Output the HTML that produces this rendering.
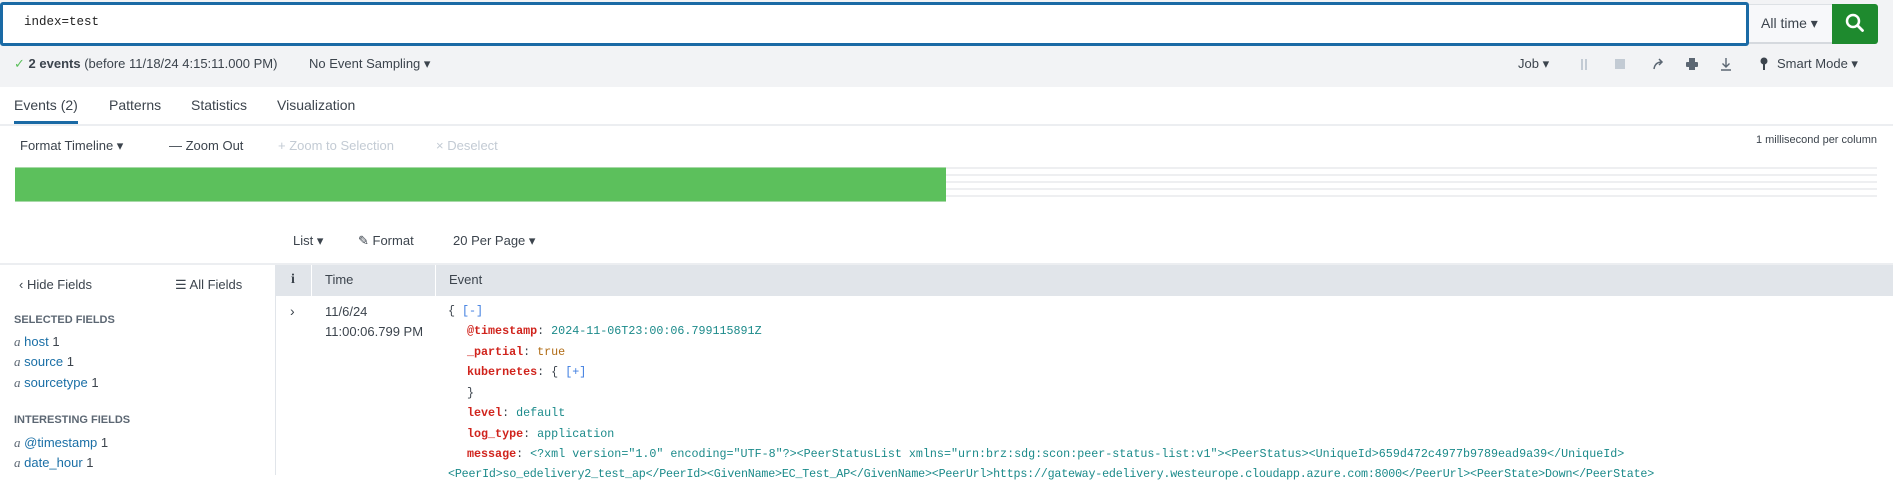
<!DOCTYPE html>
<html><head><meta charset="utf-8"><style>
*{margin:0;padding:0;box-sizing:border-box}
body{width:1893px;height:475px;overflow:hidden;background:#fff;font-family:"Liberation Sans",sans-serif;color:#3c444d;position:relative;font-size:13px}
.a{position:absolute;white-space:nowrap}
.mono{font-family:"Liberation Mono",monospace;font-size:11.7px}
.k{color:#d0231c;font-weight:bold}
.v{color:#1b8a8a}
.b{color:#3e7de0}
.t{color:#b06b14}
.lnk{color:#1a6fa6}
.it{font-family:"Liberation Serif",serif;font-style:italic;color:#5c6773}
</style></head><body>
<div class="a" style="left:0;top:0;width:1893px;height:87px;background:#f2f3f5"></div>
<div class="a" style="left:0;top:2px;width:1749px;height:44px;background:#fff;border:3px solid #1a6aa5;border-radius:3px"></div>
<div class="a mono" style="left:24px;top:15px;font-size:12.5px;color:#222">index=test</div>
<div class="a" style="left:1749px;top:4px;width:83px;height:40px;background:#f7f8fa;border-top:1px solid #dde1e5;border-bottom:2px solid #d5d9de"></div>
<div class="a" style="left:1761px;top:15px;font-size:14px;color:#3c444d">All time ▾</div>
<div class="a" style="left:1832px;top:4px;width:46px;height:40px;background:#1e8a2e;border-radius:0 3px 3px 0"></div>
<svg class="a" style="left:1845px;top:13px" width="20" height="20" viewBox="0 0 20 20"><circle cx="8" cy="8" r="6" fill="none" stroke="#fff" stroke-width="2.5"/><line x1="12.5" y1="12.5" x2="17.5" y2="17.5" stroke="#fff" stroke-width="2.8" stroke-linecap="round"/></svg>

<div class="a" style="left:14px;top:56px;font-size:13px"><span style="color:#5cc05c">✓</span> <b>2 events</b> (before 11/18/24 4:15:11.000 PM)</div>
<div class="a" style="left:309px;top:56px;font-size:13px">No Event Sampling ▾</div>
<div class="a" style="left:1518px;top:56px;font-size:13px">Job ▾</div>
<div class="a" style="left:1581px;top:59px;width:2px;height:11px;background:#c3cbd4"></div>
<div class="a" style="left:1585px;top:59px;width:2px;height:11px;background:#c3cbd4"></div>
<div class="a" style="left:1615px;top:59px;width:10px;height:10px;background:#c3cbd4"></div>
<svg class="a" style="left:1652px;top:57px" width="12" height="14" viewBox="0 0 12 14"><path d="M2 12 Q3 5 10 5 M7 2 L10 5 L7 8" fill="none" stroke="#5c6773" stroke-width="1.5"/></svg>
<svg class="a" style="left:1686px;top:58px" width="12" height="12" viewBox="0 0 12 12"><rect x="3" y="0" width="6" height="4" fill="#5c6773"/><rect x="0" y="4" width="12" height="5" rx="1" fill="#5c6773"/><rect x="3" y="8" width="6" height="4" fill="#5c6773"/></svg>
<svg class="a" style="left:1720px;top:57px" width="12" height="14" viewBox="0 0 12 14"><path d="M6 1 V10 M2.5 6.5 L6 10 L9.5 6.5 M1 13 H11" fill="none" stroke="#5c6773" stroke-width="1.4"/></svg>
<svg class="a" style="left:1760px;top:57px" width="8" height="14" viewBox="0 0 8 14"><circle cx="4" cy="4" r="3.5" fill="#3c444d"/><rect x="3" y="6" width="2" height="7" fill="#3c444d"/></svg>
<div class="a" style="left:1777px;top:56px;font-size:13px">Smart Mode ▾</div>

<div class="a" style="left:14px;top:97px;font-size:14px;color:#3c444d">Events (2)</div>
<div class="a" style="left:109px;top:97px;font-size:14px">Patterns</div>
<div class="a" style="left:191px;top:97px;font-size:14px">Statistics</div>
<div class="a" style="left:277px;top:97px;font-size:14px">Visualization</div>
<div class="a" style="left:14px;top:121px;width:64px;height:3px;background:#1a6aa5"></div>
<div class="a" style="left:0;top:124px;width:1893px;height:2px;background:#eceef1"></div>

<div class="a" style="left:20px;top:138px;font-size:13px">Format Timeline ▾</div>
<div class="a" style="left:169px;top:138px;font-size:13px">— Zoom Out</div>
<div class="a" style="left:278px;top:138px;font-size:13px;color:#c3cbd4">+ Zoom to Selection</div>
<div class="a" style="left:436px;top:138px;font-size:13px;color:#c3cbd4">× Deselect</div>
<div class="a" style="right:16px;top:134px;font-size:11px">1 millisecond per column</div>

<div class="a" style="left:945px;top:167px;width:932px;height:35px;background:repeating-linear-gradient(#eeeff1 0 2px,#fff 2px 7px)"></div>
<div class="a" style="left:15px;top:167px;width:931px;height:35px;background:#5cc05c;border-top:1px solid #a8d9a8;border-bottom:1px solid #a8d9a8"></div>

<div class="a" style="left:293px;top:233px;font-size:13px">List ▾</div>
<div class="a" style="left:358px;top:233px;font-size:13px">✎ Format</div>
<div class="a" style="left:453px;top:233px;font-size:13px">20 Per Page ▾</div>

<div class="a" style="left:0;top:263px;width:1893px;height:2px;background:#eceef1"></div>
<div class="a" style="left:276px;top:265px;width:1617px;height:31px;background:#e1e5ea"></div>
<div class="a" style="left:311px;top:265px;width:1px;height:31px;background:#fff"></div>
<div class="a" style="left:435px;top:265px;width:1px;height:31px;background:#fff"></div>
<div class="a" style="left:275px;top:265px;width:1px;height:210px;background:#e1e5ea"></div>
<div class="a" style="left:291px;top:272px;font-family:'Liberation Serif',serif;font-weight:bold;font-size:14px">i</div>
<div class="a" style="left:325px;top:272px;font-size:13px">Time</div>
<div class="a" style="left:449px;top:272px;font-size:13px">Event</div>

<div class="a" style="left:19px;top:277px;font-size:13px">‹ Hide Fields</div>
<div class="a" style="left:175px;top:277px;font-size:13px">☰ All Fields</div>
<div class="a" style="left:14px;top:314px;font-size:11px;font-weight:bold;color:#5c6773">SELECTED FIELDS</div>
<div class="a" style="left:14px;top:334px;font-size:13px"><span class="it">a</span> <span class="lnk">host</span> 1</div>
<div class="a" style="left:14px;top:354px;font-size:13px"><span class="it">a</span> <span class="lnk">source</span> 1</div>
<div class="a" style="left:14px;top:375px;font-size:13px"><span class="it">a</span> <span class="lnk">sourcetype</span> 1</div>
<div class="a" style="left:14px;top:414px;font-size:11px;font-weight:bold;color:#5c6773">INTERESTING FIELDS</div>
<div class="a" style="left:14px;top:435px;font-size:13px"><span class="it">a</span> <span class="lnk">@timestamp</span> 1</div>
<div class="a" style="left:14px;top:455px;font-size:13px"><span class="it">a</span> <span class="lnk">date_hour</span> 1</div>

<div class="a" style="left:290px;top:303px;font-size:14px">›</div>
<div class="a" style="left:325px;top:304px;font-size:13px">11/6/24</div>
<div class="a" style="left:325px;top:324px;font-size:13px">11:00:06.799 PM</div>

<div class="a mono" style="left:448px;top:304px">{ <span class="b">[-]</span></div>
<div class="a mono" style="left:467px;top:324px"><span class="k">@timestamp</span>: <span class="v">2024-11-06T23:00:06.799115891Z</span></div>
<div class="a mono" style="left:467px;top:345px"><span class="k">_partial</span>: <span class="t">true</span></div>
<div class="a mono" style="left:467px;top:365px"><span class="k">kubernetes</span>: { <span class="b">[+]</span></div>
<div class="a mono" style="left:467px;top:386px">}</div>
<div class="a mono" style="left:467px;top:406px"><span class="k">level</span>: <span class="v">default</span></div>
<div class="a mono" style="left:467px;top:427px"><span class="k">log_type</span>: <span class="v">application</span></div>
<div class="a mono" style="left:467px;top:447px"><span class="k">message</span>: <span class="v">&lt;?xml version="1.0" encoding="UTF-8"?&gt;&lt;PeerStatusList xmlns="urn:brz:sdg:scon:peer-status-list:v1"&gt;&lt;PeerStatus&gt;&lt;UniqueId&gt;659d472c4977b9789ead9a39&lt;/UniqueId&gt;</span></div>
<div class="a mono v" style="left:448px;top:467px;letter-spacing:-0.2px">&lt;PeerId&gt;so_edelivery2_test_ap&lt;/PeerId&gt;&lt;GivenName&gt;EC_Test_AP&lt;/GivenName&gt;&lt;PeerUrl&gt;https://gateway-edelivery.westeurope.cloudapp.azure.com:8000&lt;/PeerUrl&gt;&lt;PeerState&gt;Down&lt;/PeerState&gt;</div>
</body></html>
